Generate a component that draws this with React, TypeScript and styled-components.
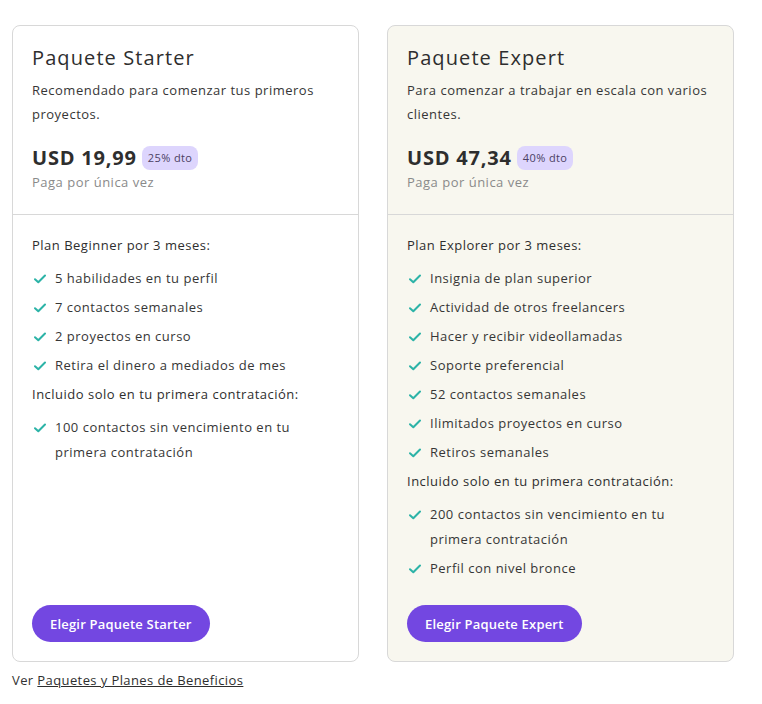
import React from "react";
import styled, { createGlobalStyle } from "styled-components";

const Global = createGlobalStyle`
  html, body { margin: 0; padding: 0; background: #ffffff; }
  body { font-family: "Open Sans", "DejaVu Sans", sans-serif; color: #333333; letter-spacing: 0.5px; }
  * { box-sizing: border-box; }
`;

const Page = styled.div`
  padding: 25px 12px 12px 12px;
`;

const Cards = styled.div`
  display: flex;
  gap: 28px;
  align-items: stretch;
`;

const Card = styled.div<{ $tinted?: boolean }>`
  width: 347px;
  border: 1px solid #d8d8d8;
  border-radius: 8px;
  background: ${(p) => (p.$tinted ? "#f8f7ef" : "#ffffff")};
  display: flex;
  flex-direction: column;
`;

const Header = styled.div`
  padding: 18px 19px 22px 19px;
  border-bottom: 1px solid #d8d8d8;
`;

const Title = styled.h2`
  margin: 0;
  font-size: 20px;
  line-height: 28px;
  font-weight: 400;
  letter-spacing: 1.1px;
  color: #2e2e2e;
`;

const Desc = styled.p`
  margin: 6px 0 0 0;
  font-size: 13px;
  line-height: 24px;
  color: #363636;
`;

const PriceRow = styled.div`
  display: flex;
  align-items: center;
  gap: 5px;
  margin-top: 20px;
  height: 24px;
`;

const Price = styled.span`
  font-size: 20px;
  font-weight: 700;
  letter-spacing: 0.8px;
  color: #2e2e2e;
  line-height: 24px;
`;

const Badge = styled.span`
  background: #ddd5fd;
  color: #4b3f63;
  font-size: 11px;
  line-height: 24px;
  padding: 0 6px;
  border-radius: 8px;
  letter-spacing: 0.4px;
`;

const Note = styled.div`
  margin-top: 2px;
  font-size: 13px;
  line-height: 20px;
  color: #8a8a8a;
`;

const Body = styled.div`
  flex: 1;
  padding: 20px 19px 19px 19px;
  display: flex;
  flex-direction: column;
`;

const SectionLabel = styled.div<{ $gap?: number }>`
  font-size: 13px;
  line-height: 20px;
  color: #2e2e2e;
  margin-top: ${(p) => p.$gap ?? 0}px;
`;

const List = styled.ul`
  list-style: none;
  margin: 11px 0 0 0;
  padding: 0;
  display: flex;
  flex-direction: column;
  gap: 4px;
`;

const Item = styled.li`
  display: flex;
  align-items: flex-start;
  gap: 9px;
  font-size: 13px;
  line-height: 25px;
  color: #363636;
`;

const CheckWrap = styled.span`
  flex: 0 0 14px;
  height: 25px;
  display: flex;
  align-items: center;
  padding-left: 2px;
`;

const Button = styled.button`
  margin-top: auto;
  align-self: flex-start;
  height: 37px;
  padding: 0 18px;
  border: none;
  border-radius: 19px;
  background: #7347e1;
  color: #ffffff;
  font-family: inherit;
  font-size: 13px;
  font-weight: 600;
  letter-spacing: 0.2px;
  cursor: pointer;
`;

const Spacer = styled.div`
  height: 24px;
  flex: 0 0 24px;
`;

const Footer = styled.div`
  margin-top: 8px;
  font-size: 13px;
  line-height: 20px;
  letter-spacing: 0.4px;
  color: #333333;
`;

const FooterLink = styled.a`
  color: #2e2e2e;
  text-decoration: underline;
`;

const Check = () => (
  <CheckWrap>
    <svg width="12" height="10" viewBox="0 0 12 10" fill="none">
      <path d="M1 5.2 L4.3 8.3 L11 1.5" stroke="#2cb3a7" strokeWidth="2" strokeLinecap="round" strokeLinejoin="round" />
    </svg>
  </CheckWrap>
);

type Plan = {
  title: string;
  desc: string;
  price: string;
  discount: string;
  planLabel: string;
  features: string[];
  extras: string[];
  cta: string;
  tinted?: boolean;
};

const plans: Plan[] = [
  {
    title: "Paquete Starter",
    desc: "Recomendado para comenzar tus primeros proyectos.",
    price: "USD 19,99",
    discount: "25% dto",
    planLabel: "Plan Beginner por 3 meses:",
    features: [
      "5 habilidades en tu perfil",
      "7 contactos semanales",
      "2 proyectos en curso",
      "Retira el dinero a mediados de mes",
    ],
    extras: ["100 contactos sin vencimiento en tu primera contratación"],
    cta: "Elegir Paquete Starter",
  },
  {
    title: "Paquete Expert",
    desc: "Para comenzar a trabajar en escala con varios clientes.",
    price: "USD 47,34",
    discount: "40% dto",
    planLabel: "Plan Explorer por 3 meses:",
    features: [
      "Insignia de plan superior",
      "Actividad de otros freelancers",
      "Hacer y recibir videollamadas",
      "Soporte preferencial",
      "52 contactos semanales",
      "Ilimitados proyectos en curso",
      "Retiros semanales",
    ],
    extras: ["200 contactos sin vencimiento en tu primera contratación", "Perfil con nivel bronce"],
    cta: "Elegir Paquete Expert",
    tinted: true,
  },
];

export default function App() {
  return (
    <Page>
      <Global />
      <Cards>
        {plans.map((p) => (
          <Card key={p.title} $tinted={p.tinted}>
            <Header>
              <Title>{p.title}</Title>
              <Desc>{p.desc}</Desc>
              <PriceRow>
                <Price>{p.price}</Price>
                <Badge>{p.discount}</Badge>
              </PriceRow>
              <Note>Paga por única vez</Note>
            </Header>
            <Body>
              <SectionLabel>{p.planLabel}</SectionLabel>
              <List>
                {p.features.map((f) => (
                  <Item key={f}>
                    <Check />
                    <span>{f}</span>
                  </Item>
                ))}
              </List>
              <SectionLabel $gap={6}>Incluido solo en tu primera contratación:</SectionLabel>
              <List>
                {p.extras.map((f) => (
                  <Item key={f}>
                    <Check />
                    <span>{f}</span>
                  </Item>
                ))}
              </List>
              <Spacer />
              <Button>{p.cta}</Button>
            </Body>
          </Card>
        ))}
      </Cards>
      <Footer>
        Ver <FooterLink href="#">Paquetes y Planes de Beneficios</FooterLink>
      </Footer>
    </Page>
  );
}
